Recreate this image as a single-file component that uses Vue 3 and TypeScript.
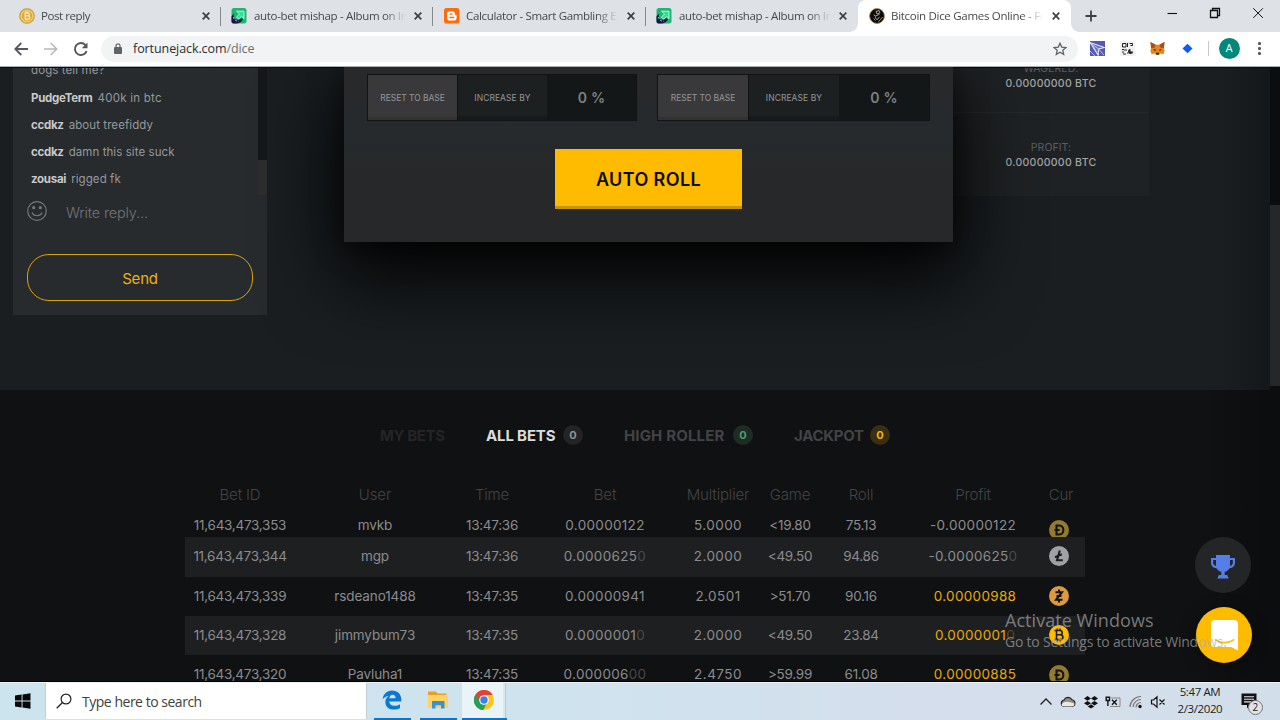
<script setup lang="ts">
interface Tab { title: string; icon: 'coin' | 'imgur' | 'blogger' | 'jack'; active?: boolean; cls?: string }
interface Bet {
  id: string; user: string; time: string; bet: string; betDim?: string; mult: string
  game: string; roll: string; profit: string; profitDim?: string; win?: boolean; cur: 'doge' | 'ltc' | 'zec' | 'btc'
}

const tabs: Tab[] = [
  { title: 'Post reply', icon: 'coin', cls: 't-post' },
  { title: 'auto-bet mishap - Album on Imgur', icon: 'imgur', cls: 't-auto' },
  { title: 'Calculator - Smart Gambling Educ', icon: 'blogger', cls: 't-calc' },
  { title: 'auto-bet mishap - Album on Imgur', icon: 'imgur', cls: 't-auto' },
  { title: 'Bitcoin Dice Games Online - Fortune', icon: 'jack', active: true, cls: 't-dice' },
]

const messages = [
  { user: 'PudgeTerm', text: '400k in btc', cls: 'm1' },
  { user: 'ccdkz', text: 'about treefiddy', cls: 'm2' },
  { user: 'ccdkz', text: 'damn this site suck', cls: 'm3' },
  { user: 'zousai', text: 'rigged fk', cls: 'm4' },
]

const betTabs = [
  { label: 'MY BETS', cls: 'my' },
  { label: 'ALL BETS', cls: 'all', count: '0' },
  { label: 'HIGH ROLLER', cls: 'high', count: '0' },
  { label: 'JACKPOT', cls: 'jackpot', count: '0' },
]

const columns = ['Bet ID', 'User', 'Time', 'Bet', 'Multiplier', 'Game', 'Roll', 'Profit', 'Cur']

const bets: Bet[] = [
  { id: '11,643,473,353', user: 'mvkb', time: '13:47:36', bet: '0.00000122', mult: '5.0000', game: '<19.80', roll: '75.13', profit: '-0.00000122', cur: 'doge' },
  { id: '11,643,473,344', user: 'mgp', time: '13:47:36', bet: '0.0000625', betDim: '0', mult: '2.0000', game: '<49.50', roll: '94.86', profit: '-0.0000625', profitDim: '0', cur: 'ltc' },
  { id: '11,643,473,339', user: 'rsdeano1488', time: '13:47:35', bet: '0.00000941', mult: '2.0501', game: '>51.70', roll: '90.16', profit: '0.00000988', win: true, cur: 'zec' },
  { id: '11,643,473,328', user: 'jimmybum73', time: '13:47:35', bet: '0.0000001', betDim: '0', mult: '2.0000', game: '<49.50', roll: '23.84', profit: '0.0000001', profitDim: '0', win: true, cur: 'btc' },
  { id: '11,643,473,320', user: 'Pavluha1', time: '13:47:35', bet: '0.000006', betDim: '00', mult: '2.4750', game: '>59.99', roll: '61.08', profit: '0.00000885', win: true, cur: 'doge' },
]
</script>

<template>
  <div class="screen">
    <header class="tabstrip">
      <div v-for="(t, i) in tabs" :key="i" class="tab" :class="{ active: t.active, sep: i < 3 }">
        <svg v-if="t.icon === 'coin'" class="fav" viewBox="0 0 16 16">
          <circle cx="8" cy="8" r="7.8" fill="#c99a32" /><circle cx="8" cy="8" r="6.6" fill="#f0cf76" />
          <circle cx="8" cy="8" r="5.2" fill="#dba93c" />
          <path d="M6.2 4.8h2.6a1.4 1.4 0 0 1 0 3H6.2zM6.2 7.8h3a1.6 1.6 0 0 1 0 3.2h-3zM7 3.6v1.2M8.6 3.6v1.2M7 11v1.3M8.6 11v1.3" fill="none" stroke="#fdf0bf" stroke-width="1.2" />
        </svg>
        <svg v-else-if="t.icon === 'imgur'" class="fav" viewBox="0 0 16 16">
          <rect x="0.5" width="15" height="15.500" rx="2.5" fill="#1fb76f" />
          <path d="M.500 8.500 2.800 5.500c-.3 3 .5 5.200 2.400 6 1.800.7 3.700 0 5.300-1.500l1.500 1.800c-1.500 2.200-4 3.800-7 3.800H2.500c-1.200 0-2-.8-2-2z" fill="#171544" />
          <path d="M5.500 3.200h7.500v7.500l-2.400-2.400-3 2.800L5.500 9l3-3z" fill="#2be09a" stroke="#d8ffec" stroke-width=".8" />
          <path d="M2.500 9c.4 3 2.200 4.300 5.500 4.200" stroke="#e9edf4" stroke-width=".8" stroke-dasharray="2 1.600" fill="none" />
        </svg>
        <svg v-else-if="t.icon === 'blogger'" class="fav" viewBox="0 0 16 16">
          <rect width="15.500" height="15.600" rx="2.600" fill="#ff6b0b" />
          <path d="M6 3.200h2.200a2.800 2.800 0 0 1 2.800 2.600c0 .9.300 1.200 1 1.200.5 0 .6.300.6.700v2a2.900 2.900 0 0 1-2.900 2.900H6a2.900 2.900 0 0 1-2.900-2.900V6.100A2.900 2.900 0 0 1 6 3.200z" fill="#fff" />
          <path d="M6 6.200h2M6 9.500h3.700" stroke="#ff6b0b" stroke-width="1.300" stroke-linecap="round" />
        </svg>
        <svg v-else class="fav" viewBox="0 0 16 16">
          <circle cx="8" cy="8" r="7.400" fill="#080808" stroke="#a8834a" stroke-width=".9" />
          <path d="M7 3.500l3-1 1 2.300-3 1.200zM5 6.500l1 1.800 4.500-2M6 9l2 2.800 2.500-3M4.500 10.500l2 2" stroke="#b9b7b0" stroke-width=".9" fill="none" />
          <path d="M9.500 13.700 13.700 9" stroke="#b98a2e" stroke-width="1" />
        </svg>
        <span class="tab-title" :class="t.cls">{{ t.title }}</span>
        <svg class="tab-close" viewBox="0 0 8 8"><path d="M.7.700 7.300 7.300M7.300.700.700 7.300" stroke="#3c4043" stroke-width="1.700" /></svg>
      </div>
      <svg class="plus" viewBox="0 0 12 12"><path d="M6 .500v11M.500 6h11" stroke="#3c4043" stroke-width="1.800" /></svg>
      <div class="win-controls">
        <svg viewBox="0 0 12 12"><path d="M1.500 6.500h9.500" stroke="#111" stroke-width="1.100" /></svg>
        <svg viewBox="0 0 12 12"><path d="M1.500 3.500h7v7h-7zM3.500 3.300V1.500h7v7H8.700" fill="none" stroke="#111" stroke-width="1.300" /></svg>
        <svg viewBox="0 0 12 12"><path d="M1.300 1.300l9.600 9.600M10.900 1.300 1.300 10.900" stroke="#111" stroke-width="1" /></svg>
      </div>
    </header>

    <div class="toolbar">
      <svg class="nav" viewBox="0 0 16 16"><path d="M15 8H2.500M8.300 2 2.300 8l6 6" fill="none" stroke="#54585d" stroke-width="1.800" /></svg>
      <svg class="nav" viewBox="0 0 16 16"><path d="M1 8h12.500M7.700 2l6 6-6 6" fill="none" stroke="#b5b8bb" stroke-width="1.500" /></svg>
      <svg class="nav" viewBox="0 0 16 16"><path d="M13.600 10.100A6 6 0 1 1 12.500 4.100" fill="none" stroke="#54585d" stroke-width="1.900" /><path d="M14.500 1.500v5.700H8.800z" fill="#54585d" /></svg>
      <div class="omnibox">
        <svg class="lock" viewBox="0 0 8 11"><path d="M2 5V2.800a2 2 0 0 1 4 0V5" fill="none" stroke="#5f6368" stroke-width="1.200" /><rect y="4" width="8" height="7" rx="1" fill="#5f6368" /></svg>
        <span class="url">fortunejack.com<i>/dice</i></span>
        <svg class="star" viewBox="0 0 14 14"><path d="M7 1.200l1.700 3.900 4.300.4-3.200 2.800.9 4.200L7 10.300l-3.700 2.200.9-4.200L1 5.500l4.300-.4z" fill="none" stroke="#5f6368" stroke-width="1.300" /></svg>
      </div>
      <div class="extensions">
        <svg viewBox="0 0 15 15"><rect width="15" height="15" fill="#5459b8" /><path d="M0 1.500 14.500 6.500 8.500 8l-.3 6.500z" fill="#6b70c8" stroke="#fff" stroke-width=".9" /><path d="M1 2.500l7.500 5.500 5.500 6M3 5l5.200 9M0 10l5 5" fill="none" stroke="#d5d7f3" stroke-width=".8" /></svg>
        <svg viewBox="0 0 15 15"><rect width="15" height="15" rx="1" fill="#f1f1f1" /><path d="M2.500 2.500h3.500v3.500H2.500zM7.500 2v4M9.500 2.500h3v2h-2M2 8.500h2M5 8v2M2 11h2M3 13h3M6.500 8.500v1M7 12h1" fill="none" stroke="#222" stroke-width="1" /><path d="M10.500 8a2.500 2.500 0 1 0 2.500 2.500h-2.500z" fill="#222" /></svg>
        <svg viewBox="0 0 16 15"><path d="M.500.500 6 3.500h4L15.500.500 14.800 7l.8 3-1.300 3.600-3-.8L9.500 14.500h-3L4.700 12.800l-3 .8L.400 10l.8-3z" fill="#e8821e" /><path d="M.500.500 6 3.500 4.500 7 1.200 7zM15.500.500 10 3.500 11.500 7l3.300 0z" fill="#a8501a" /><path d="M4 8.500l2 1M12 8.500l-2 1" stroke="#32302e" stroke-width="1.300" /><path d="M6.500 12h3v2h-3z" fill="#32302e" /></svg>
        <svg viewBox="0 0 15 15"><path d="M7.500 2.700l5 4.800-5 4.800-5-4.800z" fill="#0a5cff" /></svg>
      </div>
      <span class="bar-sep"></span>
      <span class="avatar">A</span>
      <span class="dots"><b></b><b></b><b></b></span>
    </div>

    <main class="page">
      <section class="game">
        <aside class="chat">
          <div class="chat-log">
            <div class="messages">
              <p class="cut"><span>dogs tell me?</span></p>
              <p v-for="m in messages" :key="m.text" :class="m.cls"><b>{{ m.user }}</b><span>{{ m.text }}</span></p>
            </div>
            <div class="chat-scroll"><span></span></div>
          </div>
          <div class="reply">
            <svg viewBox="0 0 20 20"><circle cx="10" cy="10" r="9.300" fill="none" stroke="#75787a" stroke-width="1.200" /><circle cx="6.700" cy="6.700" r="1.600" fill="#75787a" /><circle cx="13.300" cy="6.700" r="1.600" fill="#75787a" /><path d="M5 11.500c1.800 4.200 8.200 4.200 10 0" fill="none" stroke="#75787a" stroke-width="1.300" /></svg>
            <span>Write reply...</span>
          </div>
          <button class="send">Send</button>
        </aside>

        <div class="dice">
          <div class="groups">
            <div v-for="n in 2" :key="n" class="group" :class="'g' + n">
              <span class="reset">RESET TO BASE</span>
              <span class="inc">INCREASE BY</span>
              <span class="val">0 %</span>
            </div>
          </div>
          <button class="roll">AUTO ROLL</button>
        </div>

        <aside class="stats">
          <div class="stat wagered"><span>WAGERED:</span><b>0.00000000 BTC</b></div>
          <div class="stat profit"><span>PROFIT:</span><b>0.00000000 BTC</b></div>
        </aside>
      </section>

      <section class="history">
        <nav class="bet-tabs">
          <div v-for="b in betTabs" :key="b.cls" class="bet-tab" :class="b.cls">
            <span>{{ b.label }}</span><em v-if="b.count">{{ b.count }}</em>
          </div>
        </nav>
        <div class="table">
          <div class="row head"><span v-for="c in columns" :key="c">{{ c }}</span></div>
          <div v-for="b in bets" :key="b.id" class="row" :class="{ win: b.win }">
            <span class="id">{{ b.id }}</span>
            <span class="user">{{ b.user }}</span>
            <span class="time">{{ b.time }}</span>
            <span class="bt">{{ b.bet }}<i v-if="b.betDim">{{ b.betDim }}</i></span>
            <span class="mu">{{ b.mult }}</span>
            <span class="g">{{ b.game }}</span>
            <span>{{ b.roll }}</span>
            <span class="pf">{{ b.profit }}<i v-if="b.profitDim">{{ b.profitDim }}</i></span>
            <span class="cur">
              <svg v-if="b.cur === 'doge'" viewBox="0 0 20 20"><circle cx="10" cy="10" r="10" fill="#927a2e" /><path d="M7.500 5.500h2.700c5.600 0 5.600 9 0 9H7.500zM5.500 10h5" fill="none" stroke="#111214" stroke-width="2" /></svg>
              <svg v-else-if="b.cur === 'ltc'" viewBox="0 0 20 20"><circle cx="10" cy="10" r="10" fill="#a0a1a2" /><path d="M10.800 4.500 8 14.300h5.800M6 11.200l6.800-3" fill="none" stroke="#1c1d1f" stroke-width="2.100" /></svg>
              <svg v-else-if="b.cur === 'zec'" viewBox="0 0 20 20"><circle cx="10" cy="10" r="10" fill="#dd9a3c" /><path d="M6.500 6.200h6.500l-6 7.600h6.500M10 3.500v3M10 14v2.600M7.500 10h5" fill="none" stroke="#111214" stroke-width="2" /></svg>
              <svg v-else viewBox="0 0 20 20"><circle cx="10" cy="10" r="10" fill="#fb0" /><path d="M5.500 5.500h5.300c3.200 0 3.200 4.300 0 4.300H7.500h3.800c3.500 0 3.500 4.700 0 4.700H5.500M7.500 5.500v9M8.300 3.500v2M11 3.500v2M8.300 14.500v2M11 14.500v2" fill="none" stroke="#1c1d1f" stroke-width="1.600" /></svg>
            </span>
          </div>
        </div>
      </section>
      <div class="page-scroll"><span></span></div>
    </main>

    <footer class="taskbar">
      <svg class="start" viewBox="0 0 16 16"><path d="M0 2.400 6.600 1.500v6H0zM7.500 1.400 15.500.200v7.300h-8zM0 8.400h6.600v6L0 13.500zM7.500 8.400h8v7.300l-8-1.200z" fill="#080808" /></svg>
      <div class="search">
        <svg viewBox="0 0 16 16"><circle cx="10" cy="6" r="4.900" fill="none" stroke="#222" stroke-width="1.200" /><path d="M6.500 9.500.700 15.300" stroke="#222" stroke-width="1.300" /></svg>
        <span>Type here to search</span>
      </div>
      <div class="apps">
        <div class="app">
          <svg viewBox="0 0 20 20"><path d="M.700 9.200C1.200 4 4.800.500 10 .500c5.700 0 9.300 3.700 9.300 9.200v1.900H7.200c.2 2.800 2.300 4.200 5.300 4.200 2 0 3.800-.5 5.500-1.500v4c-1.800.9-3.800 1.300-6.200 1.300-5.300 0-8.400-3-8.400-7.600 0-2.700 1.200-4.900 3.400-6.300C4.300 6.200 2.300 7.300.700 9.200zM7.300 8.200h6.300c0-2.200-1-3.400-3-3.400-1.800 0-3 1.200-3.300 3.400z" fill="#0a78d4" /></svg>
        </div>
        <div class="app folder">
          <svg viewBox="0 0 20 18"><path d="M0 1.500C0 .7.400.500 1 .500h7l1.500 2H18.500v4H0z" fill="#e5a023" /><path d="M0 4h19c.6 0 1 .4 1 1v12H0z" fill="#fbd365" /><path d="M4 17.500V11c0-.6.400-1 1-1h10.500c.6 0 1 .4 1 1v6.500h-3.500v-3.200H7.500v3.200z" fill="#3a90d0" /></svg>
        </div>
        <div class="app current">
          <svg viewBox="0 0 20 20"><circle cx="10" cy="10" r="10" fill="#fbc61c" /><path d="M10 10 1.300 5A10 10 0 0 1 18.700 5H10z" fill="#dc4437" /><path d="M1.300 5a10 10 0 0 0 7.700 15l4.500-8L10 10z" fill="#23a05a" /><path d="M1.300 5 6 12l4-2V5.400z" fill="#dc4437" /><path d="M1.300 5 5.800 12.600 9 14l1.500 3L9 20A10 10 0 0 1 1.300 5z" fill="#23a05a" /><circle cx="10" cy="10" r="4.800" fill="#fff" /><circle cx="10" cy="10" r="3.700" fill="#3f7fe8" /></svg>
        </div>
      </div>
      <div class="tray">
        <svg viewBox="0 0 16 16"><path d="M2.500 10.500 8 5l5.500 5.500" fill="none" stroke="#222" stroke-width="1.300" /></svg>
        <svg viewBox="0 0 16 16"><path d="M4 12.500a3.300 3.300 0 0 1 0-6.500 4.500 4.500 0 0 1 8-.3 3.500 3.500 0 0 1 .5 6.800z" fill="#8e8c86" stroke="#222" stroke-width="1.100" /><path d="M1.500 10.500C5 6 9 8 14.500 9.500c0 2-1 3-2.500 3H4c-1.300 0-2.300-.9-2.500-2z" fill="#e8e8e4" /></svg>
        <svg viewBox="0 0 16 16"><path d="M4.500 2 8 4.400 4.500 6.800 1 4.400zM11.500 2 15 4.400l-3.500 2.400L8 4.400zM4.500 6.900 8 9.300l-3.500 2.300L1 9.300zM11.500 6.900 15 9.300l-3.500 2.300L8 9.300zM8 10.300l3.300 2.200L8 14.600l-3.300-2.100z" fill="#111" /></svg>
        <svg viewBox="0 0 16 16"><path d="M6 4h9v8.500H5" fill="none" stroke="#888" stroke-width="1" /><path d="M1.200 3.200h3.300v3.300H1.200zM2.900 6.500v5.500" fill="none" stroke="#111" stroke-width="1.400" /><path d="M7 5.800l4.800 5M11.800 5.800 7 10.800" stroke="#111" stroke-width="1.300" /></svg>
        <svg viewBox="0 0 16 16"><path d="M2 13A11 11 0 0 1 13 2.500M5 13a8 8 0 0 1 8-7.500M8 13.500a5 5 0 0 1 5-5" fill="none" stroke="#777" stroke-width="1.200" /><circle cx="12" cy="12.500" r="1.700" fill="#111" /></svg>
        <svg viewBox="0 0 16 16"><path d="M1.500 6h2L7 2.800v10.400L3.500 10h-2zM9.500 5.500l5 5M14.500 5.500l-5 5" fill="none" stroke="#111" stroke-width="1.200" /></svg>
      </div>
      <div class="clock"><span class="hour">5:47 AM</span><span class="date">2/3/2020</span></div>
      <div class="notify">
        <svg viewBox="0 0 16 16"><path d="M.500.500h15V12H9l-3 3.500V12H.500z" fill="#111" /><path d="M3 3.700h10M3 6.300h10M3 8.900h7" stroke="#dfe6ef" stroke-width="1.100" /></svg>
        <em>2</em>
      </div>
    </footer>

    <div class="fab trophy">
      <svg viewBox="0 0 24 24"><path d="M5 0h14v3h5v4.500c0 3.500-2 5.500-5.500 5.700-1 1.900-2.800 3.200-4.800 3.600V20h2.500l1.500 3.500H6.300L7.800 20h2.500v-3.200c-2-.4-3.800-1.700-4.800-3.600C2 13 0 11 0 7.500V3h5zM2.200 5v2.700c0 1.700 1 2.900 2.800 3.200V5zM19 5v5.900c1.800-.3 2.800-1.500 2.800-3.200V5z" fill="#557ee8" fill-rule="evenodd" /></svg>
    </div>
    <div class="fab messenger">
      <svg viewBox="0 0 28 32"><path d="M4 0h20a4 4 0 0 1 4 4v27.500l-7-3.500H4a4 4 0 0 1-4-4V4a4 4 0 0 1 4-4z" fill="#fff" /><path d="M4.500 20.500c5.500 3.800 13.500 3.800 19 0" fill="none" stroke="#fb0" stroke-width="1.700" stroke-linecap="round" /></svg>
    </div>
    <div class="watermark"><span class="wm1">Activate Windows</span><span class="wm2">Go to Settings to activate Windows.</span></div>
  </div>
</template>

<style>
html, body { background: #101113; overflow: hidden; }
</style>

<style scoped>
* { box-sizing: border-box; }
.screen { position: relative; width: 1280px; height: 720px; display: flex; flex-direction: column; overflow: hidden; font-family: "Open Sans", "Noto Sans", sans-serif; }
svg { display: block; flex: none; }
button { font: inherit; padding: 0; margin: 0; }
i, em { font-style: normal; }

.tabstrip { height: 32px; flex: none; display: flex; background: #dee1e6; padding-left: 8px; }
.tab { position: relative; width: 212.500px; height: 32px; display: flex; align-items: center; padding: 0 11px; }
.tab.active { background: #fff; border-radius: 8px 8px 0 0; }
.tab.active::before, .tab.active::after { content: ""; position: absolute; bottom: 0; width: 8px; height: 8px; }
.tab.active::before { left: -8px; background: radial-gradient(circle at 0 0, #dee1e6 7.500px, #fff 8px); }
.tab.active::after { right: -8px; background: radial-gradient(circle at 100% 0, #dee1e6 7.500px, #fff 8px); }
.tab.sep::after { content: ""; position: absolute; right: 0; top: 7px; width: 1px; height: 19px; background: #85888c; }
.fav { width: 16px; height: 16px; margin-left: -.500px; }
.tab-title { width: 154px; margin-left: 6.500px; overflow: hidden; white-space: nowrap; font-size: 11.500px; line-height: 18px; color: #45494d; -webkit-mask-image: linear-gradient(90deg, #000 130px, transparent 152px); mask-image: linear-gradient(90deg, #000 130px, transparent 152px); }
.t-post { letter-spacing: -.420px; }
.t-auto { letter-spacing: -.330px; padding-left: .500px; }
.t-calc { letter-spacing: -.330px; }
.t-dice { letter-spacing: -.290px; }
.tab-close { width: 8px; height: 8px; margin-left: 7px; }
.plus { width: 12px; height: 12px; margin: 10px 0 0 14.500px; }
.win-controls { display: flex; gap: 31px; margin: 7px 0 0 68.500px; }
.win-controls svg { width: 12px; height: 12px; }

.toolbar { height: 35px; flex: none; display: flex; align-items: center; background: #fff; border-bottom: 1px solid #a9afb3; padding: 0 0 1px 13px; }
.nav { width: 16px; height: 16px; margin: 0 14px 0 -.500px; }
.nav + .nav { margin-left: 0; }
.omnibox { width: 977px; height: 26px; margin-left: -2px; margin-right: 12px; border-radius: 13px; background: #f1f3f4; display: flex; align-items: center; padding: 0 11px 0 13px; }
.lock { width: 8px; height: 11px; }
.url { flex: 1; margin-left: 11.500px; font-size: 12.500px; letter-spacing: -.080px; color: #2b2e31; }
.url i { color: #6b6f73; }
.star { width: 14px; height: 14px; }
.extensions { display: flex; gap: 15px; }
.extensions svg { width: 15px; height: 15px; }
.bar-sep { width: 1px; height: 15px; background: #c6c9cc; margin-left: 13px; }
.avatar { width: 21px; height: 21px; margin-left: 10px; border-radius: 50%; background: #00897b; color: #fff; font: 11px/21px Roboto, sans-serif; text-align: center; }
.dots { display: flex; flex-direction: column; gap: 2.500px; margin-left: 18.500px; }
.dots b { width: 2.500px; height: 2.500px; border-radius: 50%; background: #55595d; }

.page { position: relative; height: 615px; flex: none; overflow: hidden; background: #101113; font-family: Inter, "Open Sans", sans-serif; }
.page::after { content: ""; position: absolute; inset: 0; box-shadow: inset 0 1px #0b0d0e, inset 0 -1px #020202; pointer-events: none; }
.game { position: relative; height: 323px; display: flex; align-items: flex-start; overflow: hidden; padding-left: 13px; background: linear-gradient(90deg, transparent 1220px, rgba(8, 10, 11, .35) 1275px), #1a1e21; }
.chat { width: 254px; height: 248px; background: #272b2e; display: flex; flex-direction: column; }
.chat-log { height: 128px; display: flex; overflow: hidden; }
.messages { width: 245px; padding-left: 18px; font-size: 11.500px; color: #96999b; }
.messages p { margin: 0; height: 27.300px; line-height: 28.600px; white-space: nowrap; letter-spacing: -.280px; }
.messages span { letter-spacing: .080px; }
.messages .cut { height: 16.500px; line-height: 6px; }
.messages .cut span { letter-spacing: .100px; }
.messages b { color: #c9cacb; font-weight: 700; margin-right: 5px; }
.messages .m1 span { letter-spacing: .250px; }
.chat-scroll { width: 9px; height: 128px; background: #151718; padding-top: 93px; }
.chat-scroll span { display: block; height: 35px; background: #2d2d2e; }
.reply { height: 59px; display: flex; align-items: flex-start; padding: 6px 0 0 14px; font-size: 14.500px; line-height: 21px; color: #717476; }
.reply svg { width: 20px; height: 20px; }
.reply span { margin: 0 0 0 19px; letter-spacing: -.170px; font-weight: 300; padding-top: .500px; }
.send { width: 226px; height: 47px; margin-left: 14px; border: 1px solid #d9a30b; border-radius: 22px; background: transparent; color: #edb20b; font-size: 15px; letter-spacing: -.200px; padding-top: 1px; }
.dice { position: relative; z-index: 1; width: 609px; height: 175px; margin-left: 77px; background: linear-gradient(#28292b, #262a2c 35%, #272829 65%); box-shadow: 0 30px 75px 8px rgba(0, 0, 0, .9), 0 5px 25px rgba(0, 0, 0, .5); display: flex; flex-direction: column; align-items: center; }
.groups { width: 609px; padding: 7px 23px 0; display: flex; justify-content: space-between; }
.group { height: 47px; display: flex; background: #141718; border: 1px solid #111314; line-height: 47px; text-align: center; color: #949697; font-size: 8.500px; white-space: nowrap; }
.g1 { width: 270px; }
.g2 { width: 273px; }
.group span { flex: 1; }
.group .reset { background: #39393b; border-right: 1px solid #101112; box-shadow: inset 0 -3px #323233; letter-spacing: -.050px; }
.group .inc { background: #1d2021; box-shadow: inset 0 -4px #18191a; letter-spacing: .060px; }
.group .val { font-size: 14px; font-weight: 600; color: #7f8182; line-height: 45px; letter-spacing: .300px; }
.roll { width: 187px; height: 60px; margin-top: 28px; border: 0; border-bottom: 3px solid #c79409; background: #fb0; color: #0d0d0b; font-size: 18px; font-weight: 600; letter-spacing: .400px; padding-top: 3px; }
.stats { width: 196px; height: 129px; background: #1f2224; }
.stat { display: flex; flex-direction: column; align-items: center; font-size: 10.500px; line-height: 15px; color: #5b5e60; letter-spacing: .050px; }
.stat b { color: #a3a5a6; font-weight: 500; letter-spacing: .280px; }
.wagered { height: 46px; border-bottom: 1px solid #272a2c; }
.wagered span { margin-top: -6px; }
.profit { padding-top: 27px; }

.history { height: 292px; padding-top: 35px; background: linear-gradient(90deg, transparent 1200px, rgba(0, 0, 0, .3) 1280px); }
.bet-tabs { display: flex; gap: 41px; padding-left: 380px; height: 20px; }
.bet-tab { display: flex; gap: 8px; color: #424344; font-size: 15px; font-weight: 700; line-height: 21px; letter-spacing: -.300px; white-space: nowrap; }
.bet-tab em { width: 20px; height: 20px; border-radius: 50%; text-align: center; font-size: 11px; line-height: 20px; letter-spacing: 0; background: #232425; color: #909192; }
.my { color: #242526; letter-spacing: -.400px; }
.my span { width: 65px; }
.all { color: #dcdddd; letter-spacing: -.150px; }
.all span { width: 69px; }
.high { letter-spacing: .150px; }
.high span { width: 101px; }
.bet-tab.high em { background: #1e2c26; color: #4d9b6b; }
.jackpot span { width: 68px; }
.bet-tab.jackpot em { background: #3a2e13; color: #efb20d; }
.table { width: 900px; margin: 38px 0 0 185px; color: #8b8c8d; font-size: 13.500px; }
.row { display: grid; grid-template-columns: 110px 160px 74px 152px 74px 70px 72px 152px 24px; height: 39.350px; line-height: 38px; text-align: center; white-space: nowrap; letter-spacing: -.270px; }
.row > span { display: flex; justify-content: center; }
.row .bt, .row .pf { letter-spacing: .320px; }
.row .mu { letter-spacing: .450px; }
.row .user { letter-spacing: -.120px; }
.row.head { height: 32px; line-height: 20px; padding-top: 2px; color: #434445; font-size: 15px; letter-spacing: -.150px; font-weight: 300; }
.row:nth-child(2) { height: 22.300px; line-height: 20px; overflow: hidden; }
.row:nth-child(odd) { background: #1e1f21; }
.row.head { background: none; }
.row i { color: #48494a; }
.win .pf { color: #e6ab0c; }
.row.win .pf { padding-left: 4px; }
.win .pf i { color: #5d4a15; }
.cur { align-items: center; padding-right: 4px; }
.row .cur { padding-bottom: 1px; }
.cur svg { width: 20px; height: 20px; }
.row:nth-child(2) .cur { align-items: flex-start; padding-top: 5px; }
.page-scroll { position: absolute; right: 0; top: 0; width: 10px; height: 615px; background: #0c0d0e; padding-top: 138px; }
.page-scroll span { display: block; height: 181px; background: #262728; }

.taskbar { height: 38px; flex: none; display: flex; background: linear-gradient(90deg, #cbe4ee, #cfe3ee 45%, #d5deec 75%, #d3deeb); border-top: 1px solid #eef3f6; font-size: 12px; color: #1b1d20; }
.start { width: 16px; height: 16px; margin: 10px 0 0 15px; }
.search { width: 322px; height: 36px; margin-left: 14px; background: #fff; border-left: 1px solid #c3cdd2; border-right: 1px solid #c3cdd2; display: flex; align-items: center; padding-left: 10px; font-size: 14px; color: #3d3f41; }
.search svg { width: 16px; height: 16px; }
.search span { margin-left: 10px; letter-spacing: -.480px; }
.apps { display: flex; gap: 9px; margin-left: 7px; }
.app { width: 37px; height: 37px; border-bottom: 2px solid #0078d7; display: flex; justify-content: center; align-items: center; }
.app svg { width: 20px; height: 20px; margin: 0 1px 1px 0; }
.app.current { width: 45px; margin-left: -4px; background: linear-gradient(90deg, #eaf4f8 41px, #d9e9f0 41px, #d9e9f0 43px, #b7c9d1 43px, #b7c9d1 44px, transparent 44px); }
.tray { display: flex; gap: 6.400px; margin-left: 531px; padding-top: 10.500px; }
.tray svg { width: 16px; height: 16px; }
.clock { width: 60px; margin-left: 4px; display: flex; flex-direction: column; align-items: center; white-space: nowrap; line-height: 17px; padding-top: 0; font-size: 11.500px; }
.hour, .date { letter-spacing: -.400px; }
.notify { position: relative; width: 22px; margin: 10px 0 0 11px; }
.notify svg { width: 16px; height: 16px; }
.notify em { position: absolute; left: 7px; top: 7px; width: 15px; height: 15px; border-radius: 50%; border: 1px solid #777; background: #dfe3e8; text-align: center; font-size: 10px; line-height: 13px; }

.fab { position: absolute; width: 56px; height: 56px; border-radius: 50%; display: flex; align-items: center; justify-content: center; }
.trophy { left: 1195px; top: 537px; background: #242527; }
.trophy svg { width: 24px; height: 24px; margin-top: 4px; }
.messenger { left: 1196px; top: 607px; background: #fb0; box-shadow: 0 2px 16px rgba(0, 0, 0, .4); }
.messenger svg { width: 27px; height: 31px; }
.watermark { position: absolute; left: 1005px; top: 608px; display: flex; flex-direction: column; white-space: nowrap; color: rgba(172, 173, 174, .68); }
.wm1 { font-size: 18px; line-height: 25px; letter-spacing: .050px; }
.wm2 { font-size: 14px; line-height: 18px; letter-spacing: -.220px; }
</style>
